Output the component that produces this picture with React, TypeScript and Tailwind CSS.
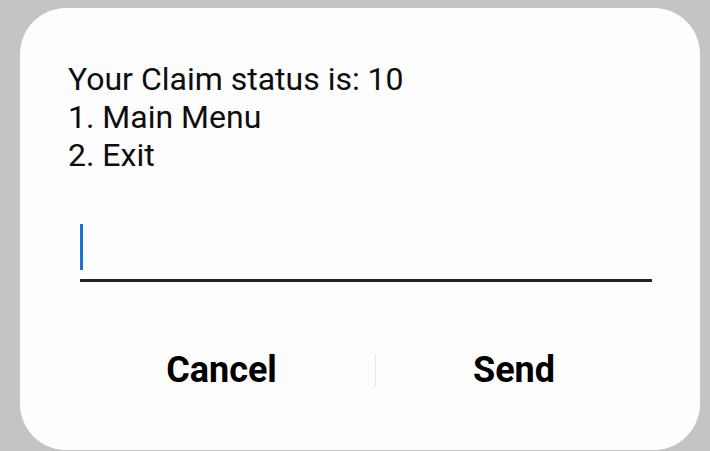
export default function App() {
  return (
    <div className="h-[451px] w-[710px] overflow-hidden bg-[#c4c4c4] pt-2 pl-5 pr-[10px] font-['Roboto',sans-serif]">
      <div className="flex h-[442px] flex-col rounded-[46px] bg-[#fdfdfd] px-12 pt-[52px]">
        <div className="text-[32px] leading-[38px] text-[#0d0d0d]">
          <p>Your Claim status is: 10</p>
          <p>1. Main Menu</p>
          <p>2. Exit</p>
        </div>

        <div className="mt-[50px] ml-3 border-b-[3px] border-[#222] pb-[9px]">
          <div className="h-[46px] w-[2.5px] bg-[#1e74c8]" />
        </div>

        <div className="mt-[68px] flex items-center">
          <button className="w-[307px] text-center text-[36px] font-bold leading-[40px] text-black">
            Cancel
          </button>
          <div className="h-[33px] w-px bg-[#e6e6e6]" />
          <button className="flex-1 text-center text-[36px] font-bold leading-[40px] text-black">
            Send
          </button>
        </div>
      </div>
    </div>
  )
}
